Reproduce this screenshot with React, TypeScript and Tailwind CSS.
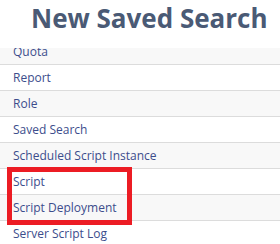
import React from "react";

const rows = [
  "Quota",
  "Report",
  "Role",
  "Saved Search",
  "Scheduled Script Instance",
  "Script",
  "Script Deployment",
  "Server Script Log",
];

export default function App() {
  return (
    <div
      className="h-[244px] w-[280px] overflow-hidden bg-white"
      style={{ fontFamily: '"Open Sans", "Liberation Sans", sans-serif' }}
    >
      <div className="flex h-[48px] items-start pl-[31px]">
        <h1 className="whitespace-nowrap text-[26px] font-bold leading-[36px] text-[#4a5a75]">
          New Saved Search
        </h1>
      </div>

      <div className="relative h-[196px] overflow-hidden">
        <div className="-mt-[9px]">
          {rows.map((label, idx) => (
            <div
              key={label}
              className={`flex h-[26px] items-center border-b border-[#dcdcdc] pl-[13px] text-[12px] text-[#3c4d8c] ${
                idx % 2 === 0 ? "bg-[#f8f8f8]" : "bg-white"
              }`}
            >
              {label}
            </div>
          ))}
        </div>

        {/* highlight box */}
        <div className="absolute left-[7px] top-[119px] h-[58px] w-[125px] border-[5px] border-[#ec1c24]" />
      </div>
    </div>
  );
}
